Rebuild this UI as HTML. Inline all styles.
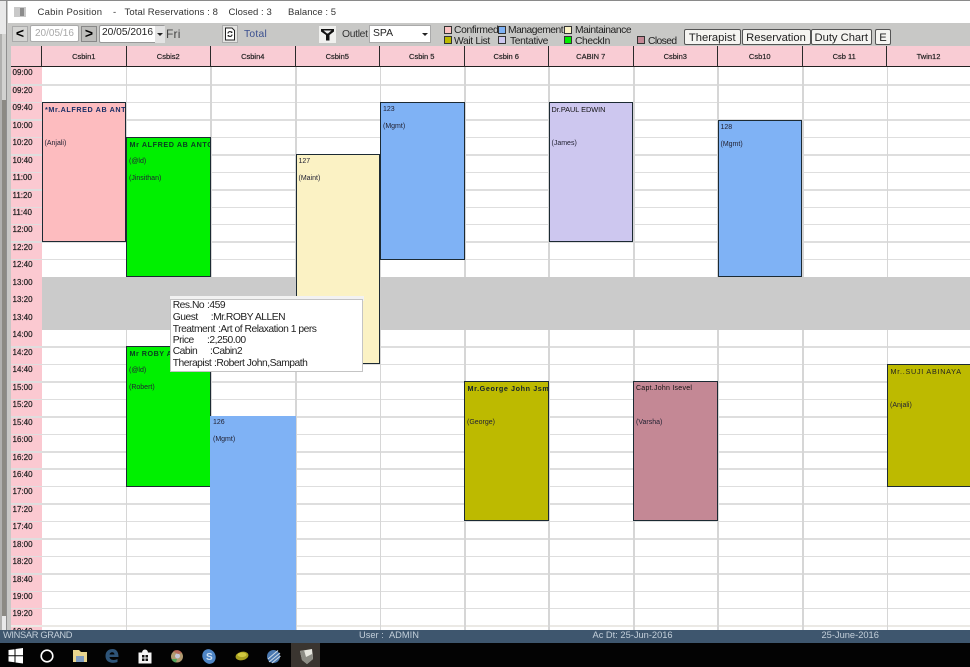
<!DOCTYPE html>
<html><head><meta charset="utf-8">
<style>
html,body{margin:0;padding:0;background:#fff}
#p{position:relative;width:970px;height:667px;overflow:hidden;background:#fff;font-family:"Liberation Sans",sans-serif;color:#111;filter:blur(.3px)}
#p div{position:absolute;white-space:nowrap}
.hl{left:11px;width:959px;height:1.5px;background:#dedede}
.vl{top:67px;width:1.5px;height:563px;background:#d6d6d6}
.hc{top:46px;height:21px;line-height:22px;text-align:center;font-size:7.5px;color:#222;background:#f9ccd4;border-right:1.5px solid #2a2a2a;border-bottom:1.5px solid #222;box-sizing:border-box;-webkit-text-stroke:.2px #222}
.t{left:12.5px;font-size:8px;line-height:10px;color:#222;-webkit-text-stroke:.2px #222}
.b{box-sizing:border-box;border:1px solid #1c2a33;overflow:hidden}
.n{left:2.5px;top:2px;font-size:7.2px;line-height:9px;font-weight:bold;letter-spacing:.6px;color:#14284a}
.s{left:2px;font-size:7px;line-height:9px;color:#223}
.lg{font-size:10.3px;line-height:11px;color:#222;letter-spacing:-.35px}
.sw{width:6px;height:6px;border:1px solid #333}
.btn{top:29px;height:16px;line-height:16px;text-align:center;font-size:11.2px;color:#222;background:#f5f4f1;border:1px solid #555;border-radius:2px;box-sizing:border-box}
.st{top:630px;font-size:9.3px;line-height:11px;color:#c3cfda}
.tip{font-size:10.3px;line-height:11.5px;color:#222;letter-spacing:-.48px}
</style></head>
<body><div id="p">

<!-- left window edge -->
<div style="left:0;top:0;width:970px;height:1px;background:#8a8a8a"></div>
<div style="left:0;top:1px;width:7px;height:629px;background:#e9e9e9"></div>
<div style="left:0;top:34px;width:2px;height:596px;background:#b0b0ae"></div>
<div style="left:2px;top:34px;width:5px;height:66px;background:#d2d2d0"></div>
<div style="left:2px;top:100px;width:5px;height:516px;background:#8c8a84"></div>
<div style="left:6px;top:1px;width:1px;height:629px;background:#8f8f8f"></div>
<div style="left:7px;top:1px;width:1px;height:22px;background:#c8c8c6"></div>
<div style="left:7px;top:23px;width:4px;height:607px;background:#c8c8c6"></div>

<!-- title -->
<div style="left:14px;top:7px;width:12px;height:10px;background:#c9c9c9"></div>
<div style="left:20px;top:8px;width:4px;height:8px;background:#8c8c8c"></div>
<div style="left:37.5px;top:7px;font-size:9.5px;line-height:12px;color:#333;letter-spacing:.25px">Cabin Position</div>
<div style="left:113px;top:7px;font-size:9.5px;line-height:12px;color:#333">-</div>
<div style="left:124.5px;top:7px;font-size:9.5px;line-height:12px;color:#333;letter-spacing:.1px">Total Reservations : 8</div>
<div style="left:228.5px;top:7px;font-size:9.5px;line-height:12px;color:#333;letter-spacing:.05px">Closed : 3</div>
<div style="left:288px;top:7px;font-size:9.5px;line-height:12px;color:#333;letter-spacing:.05px">Balance : 5</div>

<!-- toolbar -->
<div style="left:8px;top:23px;width:962px;height:23px;background:#c8c8c6"></div>
<div style="left:12px;top:26px;width:16px;height:16px;background:#d4d4d2;border:1px solid #aaa;box-sizing:border-box;font-size:14px;line-height:13px;font-weight:bold;text-align:center;color:#000">&lt;</div>
<div style="left:30px;top:25px;width:49px;height:17px;background:#fff;border:1px solid #aaa;border-radius:2px;box-sizing:border-box;font-size:10px;line-height:15px;color:#a8a8a8;padding-left:4px">20/05/16</div>
<div style="left:81px;top:26px;width:16px;height:16px;background:#bdbdbb;border:1px solid #888;box-sizing:border-box;font-size:14px;line-height:13px;font-weight:bold;text-align:center;color:#000">&gt;</div>
<div style="left:99px;top:25px;width:66px;height:18px;background:#fff;border:1px solid #999;border-radius:2px;box-sizing:border-box;font-size:10.2px;line-height:14px;color:#222;padding-left:2px">20/05/2016</div>
<div style="left:155px;top:26px;width:10px;height:17px;background:#e3e3e3"></div>
<div style="left:157px;top:33px;width:0;height:0;border:3px solid transparent;border-top:3px solid #222"></div>
<div style="left:166px;top:27px;font-size:12px;line-height:15px;color:#444;letter-spacing:.2px">Fri</div>
<svg style="position:absolute;left:222px;top:25px" width="16" height="18" viewBox="0 0 16 18"><rect x=".5" y=".5" width="15" height="17" fill="#e4e4e2" stroke="#aaa"/><path d="M3.500 3H10L12.500 5.500V15H3.500Z" fill="#fff" stroke="#222"/><path d="M6 8.500C6 6.500 8.500 5.800 9.500 7.500M10 9.500C10 11.500 7.500 12.200 6.500 10.500" fill="none" stroke="#222" stroke-width="1.100"/><path d="M8.800 8L10.500 8L10 5.800ZM5.500 10L7.200 10L6 12.200Z" fill="#222"/></svg>
<div style="left:244px;top:28px;font-size:10.3px;line-height:13px;color:#3a4f8f;letter-spacing:.25px">Total</div>
<div style="left:319px;top:26px;width:17px;height:17px;background:#f0f0ee"></div>
<svg style="position:absolute;left:320px;top:28px" width="15" height="13" viewBox="0 0 15 13"><path d="M1 1H14V3.500L9.500 7V12.500H6V7L1 3.500Z" fill="#111"/><path d="M3.500 2.500H11.500L8 5.500H7Z" fill="#e8e8e8"/></svg>
<div style="left:342px;top:28px;font-size:10.3px;line-height:13px;color:#333;letter-spacing:-.3px">Outlet</div>
<div style="left:369px;top:25px;width:62px;height:18px;background:#fff;border:1px solid #aaa;box-sizing:border-box;font-size:10.4px;line-height:16px;color:#222;padding-left:3px">SPA</div>
<div style="left:422px;top:33px;width:0;height:0;border:3px solid transparent;border-top:3px solid #222"></div>

<!-- legend -->
<div class="sw" style="left:444px;top:26px;background:#fcc2c2"></div>
<div class="lg" style="left:454px;top:25px">Confirmed</div>
<div class="sw" style="left:498px;top:26px;background:#7fb2f5"></div>
<div class="lg" style="left:508px;top:25px;letter-spacing:-.5px">Management</div>
<div class="sw" style="left:564px;top:26px;background:#fbf3c5"></div>
<div class="lg" style="left:575px;top:25px;letter-spacing:-.42px">Maintainance</div>
<div class="sw" style="left:444px;top:36px;background:#bdba00"></div>
<div class="lg" style="left:454px;top:35.5px">Wait List</div>
<div class="sw" style="left:498px;top:36px;background:#cdc7ef"></div>
<div class="lg" style="left:510px;top:35.5px">Tentative</div>
<div class="sw" style="left:564px;top:36px;background:#00ee00"></div>
<div class="lg" style="left:575px;top:35.5px;letter-spacing:-.4px">CheckIn</div>
<div class="sw" style="left:637px;top:36px;background:#c48895"></div>
<div class="lg" style="left:648px;top:35.5px;letter-spacing:-.6px">Closed</div>

<div class="btn" style="left:683.5px;width:57.5px">Therapist</div>
<div class="btn" style="left:741.5px;width:69px">Reservation</div>
<div class="btn" style="left:811px;width:60.5px">Duty Chart</div>
<div class="btn" style="left:875px;width:16px">E</div>

<!-- grid -->
<div style="left:11px;top:46px;width:30.5px;height:584px;background:#fbc9d1"></div>
<div class="hc" style="left:11px;width:31px"></div>
<div class="hc" style="left:42px;width:84.5px">Csbin1</div>
<div class="hc" style="left:126.5px;width:84.5px">Csbis2</div>
<div class="hc" style="left:211px;width:84.5px">Csbin4</div>
<div class="hc" style="left:295.5px;width:84.5px">Csbin5</div>
<div class="hc" style="left:380px;width:84.5px">Csbin 5</div>
<div class="hc" style="left:464.5px;width:84.5px">Csbin 6</div>
<div class="hc" style="left:549px;width:84.5px">CABIN 7</div>
<div class="hc" style="left:633.5px;width:84.5px">Csbin3</div>
<div class="hc" style="left:718px;width:84.5px">Csb10</div>
<div class="hc" style="left:802.5px;width:84.5px">Csb 11</div>
<div class="hc" style="left:887px;width:83px;border-right:0">Twin12</div>

<div class="hl" style="top:84px"></div><div class="hl" style="top:101.5px"></div><div class="hl" style="top:119px"></div><div class="hl" style="top:136.5px"></div><div class="hl" style="top:154px"></div><div class="hl" style="top:171.5px"></div><div class="hl" style="top:189px"></div><div class="hl" style="top:206.5px"></div><div class="hl" style="top:223.5px"></div><div class="hl" style="top:241px"></div><div class="hl" style="top:258.5px"></div><div class="hl" style="top:346px"></div><div class="hl" style="top:363.5px"></div><div class="hl" style="top:381px"></div><div class="hl" style="top:398.5px"></div><div class="hl" style="top:416px"></div><div class="hl" style="top:433.5px"></div><div class="hl" style="top:451px"></div><div class="hl" style="top:468px"></div><div class="hl" style="top:485.5px"></div><div class="hl" style="top:503px"></div><div class="hl" style="top:520.5px"></div><div class="hl" style="top:538px"></div><div class="hl" style="top:555.5px"></div><div class="hl" style="top:573px"></div><div class="hl" style="top:590.5px"></div><div class="hl" style="top:607.5px"></div><div class="hl" style="top:625px;background:#ebe9e5"></div>

<div class="vl" style="left:125.5px"></div><div class="vl" style="left:210px"></div><div class="vl" style="left:295px"></div><div class="vl" style="left:379.5px"></div><div class="vl" style="left:464px"></div><div class="vl" style="left:548px"></div><div class="vl" style="left:633px"></div><div class="vl" style="left:717px"></div><div class="vl" style="left:802px"></div><div class="vl" style="left:886.5px"></div>

<!-- closed band -->
<div style="left:41.5px;top:276.5px;width:929px;height:53px;background:#cbcbcb"></div>

<!-- time labels -->
<div class="t" style="top:68px">09:00</div><div class="t" style="top:85.5px">09:20</div><div class="t" style="top:103px">09:40</div><div class="t" style="top:120.5px">10:00</div><div class="t" style="top:138px">10:20</div><div class="t" style="top:155.5px">10:40</div><div class="t" style="top:173px">11:00</div><div class="t" style="top:190.5px">11:20</div><div class="t" style="top:207.5px">11:40</div><div class="t" style="top:225px">12:00</div><div class="t" style="top:242.5px">12:20</div><div class="t" style="top:260px">12:40</div><div class="t" style="top:277.5px">13:00</div><div class="t" style="top:295px">13:20</div><div class="t" style="top:312.5px">13:40</div><div class="t" style="top:330px">14:00</div><div class="t" style="top:347.5px">14:20</div><div class="t" style="top:365px">14:40</div><div class="t" style="top:382.5px">15:00</div><div class="t" style="top:400px">15:20</div><div class="t" style="top:417.5px">15:40</div><div class="t" style="top:435px">16:00</div><div class="t" style="top:452.5px">16:20</div><div class="t" style="top:469.5px">16:40</div><div class="t" style="top:487px">17:00</div><div class="t" style="top:504.5px">17:20</div><div class="t" style="top:522px">17:40</div><div class="t" style="top:539.5px">18:00</div><div class="t" style="top:557px">18:20</div><div class="t" style="top:574.5px">18:40</div><div class="t" style="top:591.5px">19:00</div><div class="t" style="top:608.5px">19:20</div><div class="t" style="top:626.5px;height:3.5px;overflow:hidden">19:40</div>

<!-- blocks -->
<div class="b" style="left:41.5px;top:102px;width:84.5px;height:140px;background:#fdbcbf"><div class="n" style="color:#1a2f66">*Mr.ALFRED AB ANTONY</div><div class="s" style="top:36px">(Anjali)</div></div>
<div class="b" style="left:126px;top:137px;width:85px;height:140px;background:#00f000"><div class="n" style="color:#0a3c22">Mr ALFRED AB ANTONY</div><div class="s" style="top:19px">(@ld)</div><div class="s" style="top:36px">(Jinsithan)</div></div>
<div class="b" style="left:295.5px;top:154px;width:84.5px;height:210px;background:#fbf2c4"><div class="s" style="top:2px">127</div><div class="s" style="top:19px">(Maint)</div></div>
<div class="b" style="left:380px;top:102px;width:84.5px;height:157.5px;background:#7fb2f5"><div class="s" style="top:2px">123</div><div class="s" style="top:19px">(Mgmt)</div></div>
<div class="b" style="left:548.5px;top:102px;width:84.5px;height:140px;background:#cdc7ef"><div class="s" style="top:2px;font-size:7.3px;color:#111">Dr.PAUL EDWIN</div><div class="s" style="top:36px">(James)</div></div>
<div class="b" style="left:717.5px;top:120px;width:84.5px;height:157px;background:#7fb2f5"><div class="s" style="top:2px">128</div><div class="s" style="top:19px">(Mgmt)</div></div>
<div class="b" style="left:126px;top:346px;width:85px;height:140.5px;background:#00f000"><div class="n" style="color:#0a3c22;letter-spacing:.5px">Mr ROBY ALLEN</div><div class="s" style="top:19px">(@ld)</div><div class="s" style="top:36px">(Robert)</div></div>
<div class="b" style="left:210px;top:416px;width:85.5px;height:214px;background:#7fb2f5;border:0"><div class="s" style="top:2px;left:3px">126</div><div class="s" style="top:19px;left:3px">(Mgmt)</div></div>
<div class="b" style="left:464px;top:381px;width:84.5px;height:140px;background:#bdba00"><div class="n" style="color:#14232e">Mr.George John Jsm</div><div class="s" style="top:36px">(George)</div></div>
<div class="b" style="left:633px;top:381px;width:84.5px;height:140px;background:#c48895"><div class="s" style="top:2px;color:#111;letter-spacing:.25px">Capt.John Isevel</div><div class="s" style="top:36px">(Varsha)</div></div>
<div class="b" style="left:887px;top:364px;width:84px;height:122.5px;background:#bdba00;border-right:0"><div class="n" style="font-weight:normal;color:#222;letter-spacing:.75px">Mr..SUJI ABINAYA</div><div class="s" style="top:36px">(Anjali)</div></div>

<!-- tooltip -->
<div style="left:170px;top:296px;width:194px;height:5px;background:#f2f2f2"></div>
<div style="left:170px;top:299px;width:193px;height:73px;background:#fff;border:1px solid #c4c4c4;box-sizing:border-box">
<div class="tip" style="left:1.7px;top:.3px">Res.No</div><div class="tip" style="left:36px;top:.3px">:459</div>
<div class="tip" style="left:1.7px;top:12px">Guest</div><div class="tip" style="left:39.7px;top:12px">:Mr.ROBY ALLEN</div>
<div class="tip" style="left:1.7px;top:24px">Treatment</div><div class="tip" style="left:47px;top:24px">:Art of Relaxation 1 pers</div>
<div class="tip" style="left:1.7px;top:35px">Price</div><div class="tip" style="left:36px;top:35px">:2,250.00</div>
<div class="tip" style="left:1.7px;top:46px">Cabin</div><div class="tip" style="left:39px;top:46px">:Cabin2</div>
<div class="tip" style="left:1.7px;top:57.5px">Therapist</div><div class="tip" style="left:43px;top:57.5px">:Robert John,Sampath</div>
</div>

<!-- status bar -->
<div style="left:0;top:630px;width:970px;height:13px;background:#3e566e"></div>
<div class="st" style="left:3px;letter-spacing:-.35px">WINSAR GRAND</div>
<div class="st" style="left:359px">User : &nbsp;ADMIN</div>
<div class="st" style="left:592.5px">Ac Dt: 25-Jun-2016</div>
<div class="st" style="left:821.5px">25-June-2016</div>

<!-- taskbar -->
<div style="left:0;top:642.5px;width:970px;height:24.5px;background:#030303"></div>
<div style="left:291px;top:643px;width:29px;height:24px;background:#3a3530"></div>
<svg style="position:absolute;left:0;top:643px" width="330" height="24" viewBox="0 643 330 24">
 <path d="M8.500 650L14.500 649.200V655.300H8.500ZM15.500 649L23 648V655.300H15.500ZM8.500 656.300H14.500V662.300L8.500 661.500ZM15.500 656.300H23V663.500L15.500 662.500Z" fill="#fff"/>
 <circle cx="47" cy="656" r="5.800" fill="none" stroke="#fff" stroke-width="1.600"/>
 <path d="M73 650H79L81 652H87V662H73Z" fill="#e8d58e"/><path d="M76 656H84V662H76Z" fill="#7f9cc0"/>
 <path d="M105.500 656C105.500 651 109 649 112.500 649C116.500 649 118.500 652 118.500 657H109.500C110 660.500 114.500 660.500 117.500 659V662C112 664 105.500 662.500 105.500 656ZM109.500 654.500H114.500C114.500 651.500 110 651.500 109.500 654.500Z" fill="#2e5478"/>
 <path d="M139 653H151V663H139ZM142.500 653C142.500 649 147.500 649 147.500 653" fill="#f4f4f4" stroke="#f4f4f4"/>
 <path d="M142 655H144.500V657.500H142ZM145.500 655H148V657.500H145.500ZM142 658.500H144.500V661H142ZM145.500 658.500H148V661H145.500Z" fill="#111"/>
 <circle cx="177" cy="656.500" r="6" fill="#b09a70"/><path d="M171.500 659A6 6 0 0 0 176 662.500L177 659Z" fill="#4fa35a"/><circle cx="177.500" cy="656" r="2.500" fill="#c8c8d8"/><path d="M173 651.500A6 6 0 0 1 182 653L178 654Z" fill="#b86a5a"/>
 <ellipse cx="209" cy="656.500" rx="6.500" ry="7.500" fill="#4f86c6" transform="rotate(-25 209 656.500)"/><text x="206" y="660" font-family="Liberation Sans" font-size="10" font-weight="bold" fill="#cfe0f2">S</text>
 <ellipse cx="242" cy="656" rx="6.500" ry="4.200" fill="#a8a020" transform="rotate(-12 242 656)"/><ellipse cx="242" cy="654.800" rx="4.500" ry="2.300" fill="#d0c840"/>
 <circle cx="273.500" cy="656.500" r="6.500" fill="#4a78b0"/><path d="M268 659L278 650.500M269 662L280 653M272 663L280.500 656" stroke="#cdd9e6" stroke-width="1.100"/>
 <path d="M300 651L312 649L313 659L307 664L302 660Z" fill="#e8e8e0"/><path d="M300 651L304 650L306 657L312 654L313 659L307 664L302 660Z" fill="#8d8d85"/>
</svg>

</div></body></html>
